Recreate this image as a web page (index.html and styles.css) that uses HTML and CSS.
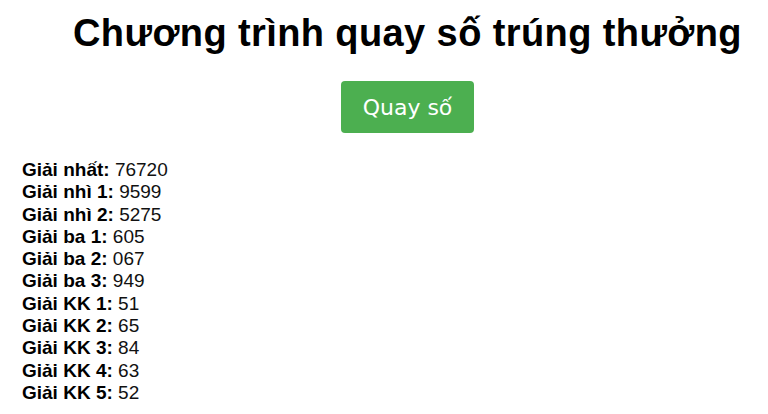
FILE: index.html
```html
<!DOCTYPE html>
<html lang="vi">
<head>
<meta charset="utf-8">
<link rel="stylesheet" href="styles.css">
</head>
<body>
<div class="head">
<h1 class="title">Chương trình quay số trúng thưởng</h1>
<div class="actions"><button class="spin">Quay số</button></div>
</div>
<div class="results">
<div class="row"><b>Giải nhất:</b> 76720</div>
<div class="row"><b>Giải nhì 1:</b> 9599</div>
<div class="row"><b>Giải nhì 2:</b> 5275</div>
<div class="row"><b>Giải ba 1:</b> 605</div>
<div class="row"><b>Giải ba 2:</b> 067</div>
<div class="row"><b>Giải ba 3:</b> 949</div>
<div class="row"><b>Giải KK 1:</b> 51</div>
<div class="row"><b>Giải KK 2:</b> 65</div>
<div class="row"><b>Giải KK 3:</b> 84</div>
<div class="row"><b>Giải KK 4:</b> 63</div>
<div class="row"><b>Giải KK 5:</b> 52</div>
</div>
</body>
</html>
```
FILE: styles.css
```css
html, body { margin: 0; padding: 0; background: #fff; }
body { font-family: "Liberation Sans", Arial, sans-serif; color: #000; }
.head { padding-left: 47px; text-align: center; }
.title { font-size: 38px; font-weight: bold; letter-spacing: 0.4px; margin: 0; padding-top: 12px; line-height: 43px; white-space: nowrap; }
.actions { margin-top: 26px; }
.spin { font-family: "DejaVu Sans", Verdana, sans-serif; font-size: 22px; color: #fff; background: #4caf50; border: none; border-radius: 4px; width: 133px; height: 52px; padding: 0; cursor: pointer; }
.results { margin-top: 26px; padding-left: 22px; font-size: 19px; line-height: 22.3px; color: #111; }
.row b { color: #000; }
```
